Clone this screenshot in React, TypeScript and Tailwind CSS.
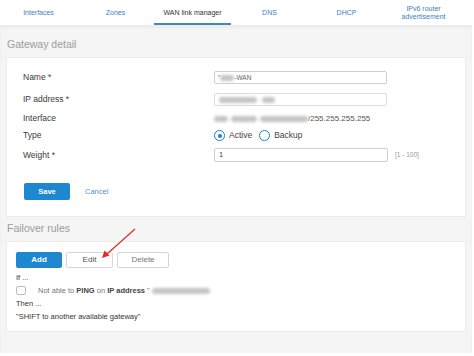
import React from "react";

// WAN link manager --- gateway detail form plus the failover rule list below it.
const tabs = ["Interfaces", "Zones", "WAN link manager", "DNS", "DHCP", "IPv6 router advertisement"];

function Blur({ w }: { w: number }) {
  return <span className="inline-block h-[6px] rounded-sm bg-[#c4c4c4] blur-[1.5px]" style={{ width: w }} />;
}

function Row({ label, h, children }: { label: string; h: string; children: React.ReactNode }) {
  return (
    <div className={`flex items-center ${h}`}>
      <span className="w-[191px] shrink-0 text-[8.5px] text-[#3a3a3a]">{label}</span>
      <div className="flex flex-1 items-center">{children}</div>
    </div>
  );
}

function Radio({ label, checked }: { label: string; checked?: boolean }) {
  return (
    <span className="flex items-center gap-[4px]">
      <span className="flex h-[11px] w-[11px] items-center justify-center rounded-full border-[1.5px] border-[#1b7fc6]">
        {checked && <span className="h-[4px] w-[4px] rounded-full bg-[#1b7fc6]" />}
      </span>
      <span className="text-[8.5px] text-[#444]">{label}</span>
    </span>
  );
}

export default function App() {
  return (
    <div className="relative h-[356px] w-[474px] overflow-hidden bg-white font-['Liberation_Sans',Arial,sans-serif]">
      <nav className="grid h-[25px] w-[462px] grid-cols-6 bg-white">
        {tabs.map((t) => {
          const active = t === "WAN link manager";
          return (
            <div
              key={t}
              className={`flex items-center justify-center px-2 text-center text-[7px] leading-[8px] ${
                active ? "border-b-2 border-[#4289b6] pt-[2px] text-[#333]" : "text-[#3c80c2]"
              }`}
            >
              {t === "IPv6 router advertisement" ? (
                <span>
                  IPv6 router
                  <br />
                  advertisement
                </span>
              ) : (
                t
              )}
            </div>
          );
        })}
      </nav>

      <main className="h-[328px] w-[472px] border-t border-[#ececec] bg-[#f5f5f5] px-[6px] shadow-[inset_0_2px_3px_rgba(0,0,0,0.04)]">
        <h2 className="flex h-[31px] items-center pl-[1px] pt-[6px] text-[10.5px] text-[#9c9c9c]">Gateway detail</h2>
        <section className="h-[160px] border border-[#ececec] bg-white px-[16px] pt-[13px]">
          <Row label="Name *" h="h-[13px]">
            <div className="flex h-[13px] w-[173px] items-center rounded-[2px] border border-[#cfcfcf] pl-[3px] text-[6.5px] text-[#666]">
              <span>&quot;</span>
              <Blur w={14} />
              <span>-WAN</span>
            </div>
          </Row>
          <div className="mt-[9px]">
            <Row label="IP address *" h="h-[13px]">
              <div className="flex h-[13px] w-[173px] items-center rounded-[2px] border border-[#dcdcdc] pl-[4px]">
                <Blur w={38} />
                <span className="ml-[5px] flex">
                  <Blur w={13} />
                </span>
              </div>
            </Row>
          </div>
          <div className="mt-[6px]">
            <Row label="Interface" h="h-[13px]">
              <span className="flex items-center text-[8px] text-[#555]">
                <Blur w={14} />
                <span className="ml-[3px]" />
                <Blur w={26} />
                <span className="ml-[3px]" />
                <Blur w={48} />
                <span>/255.255.255.255</span>
              </span>
            </Row>
          </div>
          <div className="mt-[4px]">
            <Row label="Type" h="h-[13px]">
              <Radio label="Active" checked />
              <span className="ml-[7px]">
                <Radio label="Backup" />
              </span>
            </Row>
          </div>
          <div className="mt-[6px]">
            <Row label="Weight *" h="h-[14px]">
              <div className="flex h-[14px] w-[174px] items-center rounded-[2px] border border-[#cfcfcf] pl-[4px] text-[7.5px] text-[#444]">
                1
              </div>
              <span className="ml-[7px] text-[6.5px] text-[#999]">[1 - 100]</span>
            </Row>
          </div>
          <div className="mt-[21px] flex items-center gap-[15px] pl-[1px]">
            <button className="h-[17px] w-[46px] rounded-[2px] bg-[#1d87cf] text-[7.5px] font-bold text-white">Save</button>
            <button className="text-[7.5px] text-[#4f92c9]">Cancel</button>
          </div>
        </section>

        <h2 className="flex h-[24px] items-center pl-[1px] text-[10.5px] text-[#9c9c9c]">Failover rules</h2>
        <section className="h-[91px] border border-[#ececec] bg-white px-[9px] pt-[10px] text-[7.5px] text-[#333]">
          <div className="flex h-[16px] gap-[4px]">
            <button className="w-[46px] rounded-[2px] bg-[#1d87cf] text-[8px] font-bold text-white">Add</button>
            <button className="w-[47px] rounded-[2px] border border-[#d6d6d6] bg-white text-[8px] text-[#555]">Edit</button>
            <button className="w-[52px] rounded-[2px] border border-[#d6d6d6] bg-white text-[8px] text-[#777]">Delete</button>
          </div>
          <div className="mt-[3px] flex h-[13px] items-center">If ...</div>
          <div className="flex h-[13px] items-center">
            <span className="h-[9px] w-[10px] rounded-[2px] border border-[#bdbdbd]" />
            <span className="ml-[12px] text-[#777]">
              Not able to <b className="text-[#444]">PING</b> on <b className="text-[#444]">IP address</b> &quot;
            </span>
            <span className="ml-[2px] flex">
              <Blur w={58} />
            </span>
          </div>
          <div className="flex h-[13px] items-center">Then ...</div>
          <div className="flex h-[13px] items-center">&quot;SHIFT to another available gateway&quot;</div>
        </section>
      </main>

      <svg className="pointer-events-none absolute left-0 top-0" width="474" height="356">
        <line x1="135" y1="229" x2="107" y2="254" stroke="#e12a2a" strokeWidth="1.2" />
        <polygon points="102,258 104.5,250.5 109.5,255.5" fill="#e12a2a" />
      </svg>
    </div>
  );
}
